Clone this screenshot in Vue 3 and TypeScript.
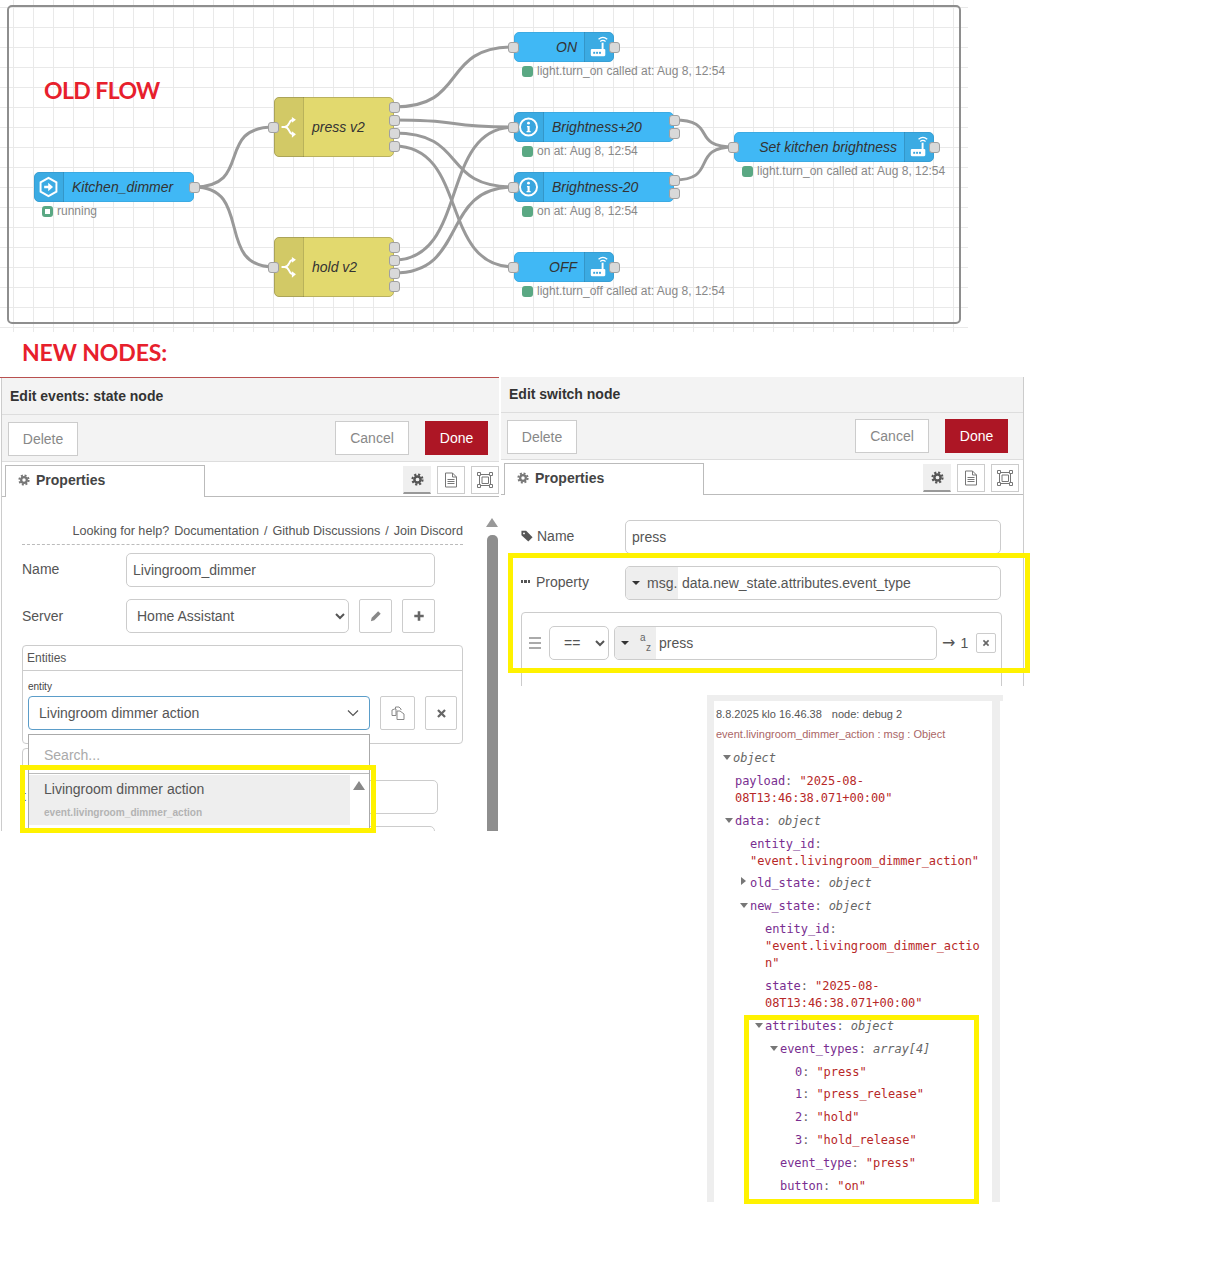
<script setup lang="ts">
interface FlowNode {
  id: string
  label: string
  x: number
  y: number
  w: number
  h: number
  color: 'blue' | 'yellow'
  icon: string
  iconRight?: boolean
  ins: number[]
  outs: number[]
  status?: string
  ring?: boolean
}

const nodes: FlowNode[] = [
  { id: 'k', label: 'Kitchen_dimmer', x: 34, y: 172, w: 160, h: 30, color: 'blue', icon: 'hex', ins: [], outs: [15], status: 'running', ring: true },
  { id: 'p', label: 'press v2', x: 274, y: 97, w: 120, h: 60, color: 'yellow', icon: 'switch', ins: [30], outs: [10, 23, 36, 49] },
  { id: 'h', label: 'hold v2', x: 274, y: 237, w: 120, h: 60, color: 'yellow', icon: 'switch', ins: [30], outs: [10, 23, 36, 49] },
  { id: 'on', label: 'ON', x: 514, y: 32, w: 100, h: 30, color: 'blue', icon: 'router', iconRight: true, ins: [15], outs: [15], status: 'light.turn_on called at: Aug 8, 12:54' },
  { id: 'bp', label: 'Brightness+20', x: 514, y: 112, w: 160, h: 30, color: 'blue', icon: 'info', ins: [15], outs: [8, 21], status: 'on at: Aug 8, 12:54' },
  { id: 'bm', label: 'Brightness-20', x: 514, y: 172, w: 160, h: 30, color: 'blue', icon: 'info', ins: [15], outs: [8, 21], status: 'on at: Aug 8, 12:54' },
  { id: 'off', label: 'OFF', x: 514, y: 252, w: 100, h: 30, color: 'blue', icon: 'router', iconRight: true, ins: [15], outs: [15], status: 'light.turn_off called at: Aug 8, 12:54' },
  { id: 's', label: 'Set kitchen brightness', x: 734, y: 132, w: 200, h: 30, color: 'blue', icon: 'router', iconRight: true, ins: [15], outs: [15], status: 'light.turn_on called at: Aug 8, 12:54' }
]

function wire(x1: number, y1: number, x2: number, y2: number): string {
  const dx = x2 - x1
  const c = dx >= 100 ? 75 : 0.75 * dx
  return `M${x1} ${y1} C${x1 + c} ${y1} ${x2 - c} ${y2} ${x2} ${y2}`
}

const wires: string[] = [
  wire(194, 187, 274, 127),
  wire(194, 187, 274, 267),
  wire(394, 107, 514, 47),
  wire(394, 120, 514, 127),
  wire(394, 133, 514, 187),
  wire(394, 146, 514, 267),
  wire(394, 260, 514, 127),
  wire(394, 273, 514, 187),
  wire(674, 120, 734, 147),
  wire(674, 180, 734, 147)
]

interface DebugRow {
  x: number
  arrow?: 'down' | 'right'
  key?: string
  val?: string
  type?: string
  more?: string[]
}

const rows: DebugRow[] = [
  { x: 733, arrow: 'down', type: 'object' },
  { x: 735, key: 'payload', val: '"2025-08-', more: ['08T13:46:38.071+00:00"'] },
  { x: 735, arrow: 'down', key: 'data', type: 'object' },
  { x: 750, key: 'entity_id', more: ['"event.livingroom_dimmer_action"'] },
  { x: 750, arrow: 'right', key: 'old_state', type: 'object' },
  { x: 750, arrow: 'down', key: 'new_state', type: 'object' },
  { x: 765, key: 'entity_id', more: ['"event.livingroom_dimmer_actio', 'n"'] },
  { x: 765, key: 'state', val: '"2025-08-', more: ['08T13:46:38.071+00:00"'] },
  { x: 765, arrow: 'down', key: 'attributes', type: 'object' },
  { x: 780, arrow: 'down', key: 'event_types', type: 'array[4]' },
  { x: 795, key: '0', val: '"press"' },
  { x: 795, key: '1', val: '"press_release"' },
  { x: 795, key: '2', val: '"hold"' },
  { x: 795, key: '3', val: '"hold_release"' },
  { x: 780, key: 'event_type', val: '"press"' },
  { x: 780, key: 'button', val: '"on"' }
]
</script>

<template>
  <div class="page">
    <svg class="defs" width="0" height="0" aria-hidden="true">
      <symbol id="hex" viewBox="0 0 30 30">
        <polygon points="15,5.5 23.2,10.2 23.2,19.8 15,24.5 6.8,19.8 6.8,10.2" fill="none" stroke="#fff" stroke-width="2" />
        <path d="M10.5 13.6h4.2v-3l5 4.4-5 4.4v-3h-4.2z" fill="#fff" />
      </symbol>
      <symbol id="info" viewBox="0 0 30 30">
        <circle cx="15" cy="15" r="8.8" fill="#3aa6de" stroke="#fff" stroke-width="2" />
        <circle cx="15" cy="11" r="1.5" fill="#fff" />
        <path d="M13.4 14h2.8v5.2h1v1.2h-4.2v-1.2h1v-4h-.6z" fill="#fff" />
      </symbol>
      <symbol id="switch" viewBox="0 0 30 30">
        <path d="M7.8 15H11C14 15 15 12.500 16 10.500C16.500 9 17.500 8 19.500 7.500M11 15C14 15 15 17.500 16 19.500C16.500 21 17.500 22 19.500 22.500" fill="none" stroke="#fff" stroke-width="2" />
        <path d="M18.500 4.700L22.700 7.500L18.500 10.500ZM18.500 19.500L22.700 22.500L18.500 26Z" fill="#fff" />
      </symbol>
      <symbol id="router" viewBox="0 0 30 30">
        <rect x="6" y="17" width="15" height="7.500" rx="1.200" fill="#fff" />
        <rect x="8.500" y="20" width="2" height="2" fill="#3aa6de" />
        <rect x="11.500" y="20" width="2" height="2" fill="#3aa6de" />
        <rect x="14.500" y="20" width="2" height="2" fill="#3aa6de" />
        <rect x="17.200" y="10.500" width="2" height="7" fill="#fff" />
        <path d="M15.700 9.400Q18.500 7 21.300 9.400M14 7Q18.500 3 23 7" fill="none" stroke="#fff" stroke-width="1.300" />
      </symbol>
      <symbol id="gear" viewBox="0 0 16 16">
        <circle cx="8" cy="8" r="6.200" fill="none" stroke="currentColor" stroke-width="2.600" stroke-dasharray="2.600 2.270" />
        <circle cx="8" cy="8" r="3.800" fill="none" stroke="currentColor" stroke-width="3" />
      </symbol>
      <symbol id="doc" viewBox="0 0 14 16">
        <path d="M1.500 1h7l4 4v10h-11zM8.500 1v4h4M3.500 7.500h7M3.500 9.500h7M3.500 11.500h7" fill="none" stroke="currentColor" />
      </symbol>
      <symbol id="frame" viewBox="0 0 16 16">
        <path d="M2.500 2.500h11v11h-11zM5 5h6.500v6.500H5z" fill="none" stroke="currentColor" />
        <path d="M.5.5h3v3h-3zM12.500.5h3v3h-3zM.5 12.500h3v3h-3zM12.500 12.500h3v3h-3z" fill="#fff" stroke="currentColor" />
      </symbol>
      <symbol id="pencil" viewBox="0 0 14 14">
        <path d="M9.500 1.500l3 3-7.500 7.500-4 1 1-4z" fill="currentColor" />
      </symbol>
      <symbol id="plus" viewBox="0 0 14 14">
        <path d="M5.500 1.500h3v4h4v3h-4v4h-3v-4h-4v-3h4z" fill="currentColor" />
      </symbol>
      <symbol id="times" viewBox="0 0 14 14">
        <path d="M3.500 1.500L7 5l3.500-3.500 2 2L9 7l3.500 3.500-2 2L7 9l-3.500 3.500-2-2L5 7 1.500 3.500z" fill="currentColor" />
      </symbol>
      <symbol id="copy" viewBox="0 0 14 14">
        <path d="M4.500 3V1h3.500l2 2v1M1 4l2.500-1H5v6.500H1zM6 5h3l4 3v5.500H6z" fill="none" stroke="currentColor" />
      </symbol>
      <symbol id="tag" viewBox="0 0 14 14">
        <path d="M.5 1h5.500l7.500 7.500-5 5L.5 6z" fill="currentColor" />
        <circle cx="3.500" cy="4" r="1.100" fill="#fff" />
      </symbol>
    </svg>

    <section class="canvas">
      <div class="group"></div>
      <div class="old-title">OLD FLOW</div>
      <svg class="wires" width="968" height="332">
        <path v-for="(d, i) in wires" :key="i" :d="d" />
      </svg>
      <div
        v-for="n in nodes"
        :key="n.id"
        class="node"
        :class="[n.color, { 'icon-right': n.iconRight }]"
        :style="{ left: n.x + 'px', top: n.y + 'px', width: n.w + 'px', height: n.h + 'px' }"
      >
        <div class="node-icon">
          <svg width="30" height="30"><use :href="'#' + n.icon" /></svg>
        </div>
        <div class="node-label">{{ n.label }}</div>
        <span v-for="p in n.ins" :key="'i' + p" class="port port-in" :style="{ top: p - 5 + 'px' }"></span>
        <span v-for="p in n.outs" :key="'o' + p" class="port port-out" :style="{ top: p - 5 + 'px' }"></span>
        <div v-if="n.status" class="status">
          <i class="dot" :class="{ ring: n.ring }"></i>{{ n.status }}
        </div>
      </div>
    </section>

    <h2 class="new-title">NEW NODES:</h2>

    <div class="panels">
      <div class="panel-left">
        <div class="tray">
          <div class="tray-head head-l">Edit events: state node</div>
          <div class="tray-btns">
            <button class="btn btn-del">Delete</button>
            <span class="grow"></span>
            <button class="btn btn-cancel">Cancel</button>
            <button class="btn btn-done">Done</button>
          </div>
          <div class="tabs">
            <div class="tab"><svg class="tab-gear" width="12" height="12"><use href="#gear" /></svg>Properties</div>
            <span class="grow"></span>
            <span class="tool active"><svg width="13" height="13"><use href="#gear" /></svg></span>
            <span class="tool"><svg width="14" height="16"><use href="#doc" /></svg></span>
            <span class="tool"><svg width="16" height="16"><use href="#frame" /></svg></span>
          </div>
          <div class="left-body">
            <div class="form">
              <div class="help">
                <span>Looking for help?</span><span>Documentation</span><span>/</span><span>Github Discussions</span><span>/</span><span>Join Discord</span>
              </div>
              <div class="row row-name">
                <label class="lbl">Name</label>
                <div class="input w309">Livingroom_dimmer</div>
              </div>
              <div class="row row-next">
                <label class="lbl">Server</label>
                <select class="native w223"><option>Home Assistant</option></select>
                <button class="sq"><svg width="12" height="12"><use href="#pencil" /></svg></button>
                <button class="sq dark"><svg width="12" height="12"><use href="#plus" /></svg></button>
              </div>
              <div class="entities">
                <div class="ent-head">Entities</div>
                <div class="ent-label">entity</div>
                <div class="ent-row">
                  <div class="ent-select">
                    <span>Livingroom dimmer action</span>
                    <svg width="12" height="8" viewBox="0 0 12 8"><path d="M1 1.500l5 5 5-5" fill="none" stroke="#555" stroke-width="1.200" /></svg>
                  </div>
                  <button class="sq w35"><svg width="14" height="14"><use href="#copy" /></svg></button>
                  <button class="sq w32 dark"><svg width="11" height="11"><use href="#times" /></svg></button>
                </div>
              </div>
              <div class="stub"></div>
              <div class="row row-behind">
                <label class="lbl">t</label>
                <div class="input w312"></div>
              </div>
              <div class="row row-behind2">
                <label class="lbl"></label>
                <div class="input w309"></div>
              </div>
              <div class="menu">
                <div class="menu-search">Search...</div>
                <div class="menu-list">
                  <div class="menu-item">
                    <div class="item-main">Livingroom dimmer action</div>
                    <div class="item-sub">event.livingroom_dimmer_action</div>
                  </div>
                  <i class="menu-up"></i>
                </div>
              </div>
            </div>
            <div class="scroll">
              <i class="scroll-up"></i>
              <div class="scroll-thumb"></div>
            </div>
          </div>
        </div>
      </div>

      <div class="col-right">
        <div class="panel-right">
          <div class="tray-head head-r">Edit switch node</div>
          <div class="tray-btns btns-r">
            <button class="btn btn-del">Delete</button>
            <span class="grow"></span>
            <button class="btn btn-cancel">Cancel</button>
            <button class="btn btn-done">Done</button>
          </div>
          <div class="tabs tabs-r">
            <div class="tab"><svg class="tab-gear" width="12" height="12"><use href="#gear" /></svg>Properties</div>
            <span class="grow"></span>
            <span class="tool active"><svg width="13" height="13"><use href="#gear" /></svg></span>
            <span class="tool"><svg width="14" height="16"><use href="#doc" /></svg></span>
            <span class="tool"><svg width="16" height="16"><use href="#frame" /></svg></span>
          </div>
          <div class="right-body">
            <div class="row r-name">
              <label class="lbl-r"><svg width="12" height="12"><use href="#tag" /></svg>Name</label>
              <div class="input w376">press</div>
            </div>
            <div class="row r-prop">
              <label class="lbl-r lbl-prop"><span class="dots"><i></i><i></i><i></i></span>Property</label>
              <div class="typed w376">
                <span class="typed-pre pre-msg"><i class="caret"></i>msg.</span>
                <span class="typed-val">data.new_state.attributes.event_type</span>
              </div>
            </div>
            <div class="rules">
              <div class="rule">
                <span class="handle"><i></i><i></i><i></i></span>
                <select class="native op"><option>==</option></select>
                <div class="typed w323">
                  <span class="typed-pre pre-az"><i class="caret"></i><span class="az"><small>a</small><small>z</small></span></span>
                  <span class="typed-val val-press">press</span>
                </div>
                <span class="out"><span class="arrow">→</span><span class="out-num">1</span></span>
                <button class="sq mini dark"><svg width="8" height="8"><use href="#times" /></svg></button>
              </div>
            </div>
          </div>
        </div>

        <div class="debug">
          <div class="debug-body">
            <div class="dbg-meta"><span>8.8.2025 klo 16.46.38</span><span>node: debug 2</span></div>
            <div class="dbg-topic">event.livingroom_dimmer_action : msg : Object</div>
            <div class="dbg-tree">
              <div v-for="(r, i) in rows" :key="i" class="dbg-row" :style="{ paddingLeft: r.x - 716 + 'px' }">
                <div class="dbg-line">
                  <i v-if="r.arrow" class="tri" :class="r.arrow"></i>
                  <template v-if="r.key"><span class="k">{{ r.key }}</span><span class="colon">: </span></template>
                  <span v-if="r.val" class="s">{{ r.val }}</span>
                  <span v-if="r.type" class="t">{{ r.type }}</span>
                </div>
                <div v-for="(m, j) in r.more" :key="j" class="dbg-line s">{{ m }}</div>
              </div>
            </div>
          </div>
        </div>
      </div>

      <div class="mark mark-a"></div>
      <div class="mark mark-b"></div>
      <div class="mark mark-c"></div>
    </div>
  </div>
</template>

<style scoped>
.page {
  position: relative;
  width: 1210px;
  height: 1285px;
  overflow: hidden;
  background: #fff;
  font-family: "Liberation Sans", Arial, sans-serif;
  font-size: 14px;
  color: #555;
}
.defs { position: absolute; }
.grow { flex: 1; }

/* canvas */
.canvas {
  position: relative;
  width: 968px;
  height: 332px;
  background-color: #fff;
  background-image:
    linear-gradient(to right, #e9e9e9 1px, transparent 1px),
    linear-gradient(to bottom, #e9e9e9 1px, transparent 1px);
  background-size: 20px 20px;
  background-position: 13px 7px;
}
.group {
  position: absolute;
  left: 7px;
  top: 5px;
  width: 950px;
  height: 315px;
  border: 2px solid #8e8e8e;
  border-radius: 5px;
}
.old-title {
  position: absolute;
  left: 44px;
  top: 76px;
  font-family: Lato, "Open Sans", sans-serif;
  font-weight: 700;
  font-size: 23px;
  letter-spacing: -0.6px;
  line-height: 29px;
  color: #e7202c;
}
.wires { position: absolute; left: 0; top: 0; }
.wires path { fill: none; stroke: #999; stroke-width: 3; }
.node {
  position: absolute;
  box-sizing: border-box;
  display: flex;
  border-radius: 5px;
  border: 1px solid transparent;
  color: #333;
}
.node.blue { background: #40b8f5; border-color: #3cabe3; }
.node.yellow { background: #e2d96e; border-color: #b9b160; }
.node-icon {
  width: 29px;
  flex: none;
  margin: -1px 0 -1px -1px;
  display: flex;
  align-items: center;
  justify-content: center;
  border-radius: 5px 0 0 5px;
  border-right: 1px solid rgba(0, 0, 0, 0.12);
  background: rgba(0, 0, 0, 0.07);
}
.node-label {
  flex: 1;
  align-self: center;
  padding-left: 8px;
  font-style: italic;
  font-size: 14px;
  line-height: 16px;
  white-space: nowrap;
}
.icon-right { flex-direction: row-reverse; }
.icon-right .node-icon {
  margin: -1px -1px -1px 0;
  border-radius: 0 5px 5px 0;
  border-right: none;
  border-left: 1px solid rgba(0, 0, 0, 0.12);
}
.icon-right .node-label { text-align: right; padding: 0 7px 0 0; }
.port {
  position: absolute;
  box-sizing: border-box;
  width: 11px;
  height: 11px;
  background: #d9d9d9;
  border: 1px solid #a0a0a0;
  border-radius: 3px;
  margin-top: -1.5px;
}
.port-in { left: -7px; }
.port-out { right: -7px; }
.status {
  position: absolute;
  left: 7px;
  top: 100%;
  margin-top: 2px;
  display: flex;
  align-items: center;
  font-size: 12px;
  line-height: 16px;
  color: #888;
  white-space: nowrap;
}
.dot {
  box-sizing: border-box;
  width: 11px;
  height: 11px;
  margin-right: 4px;
  border-radius: 3px;
  background: #5aa883;
}
.dot.ring { background: #fff; border: 3px solid #5aa883; }

.new-title {
  margin: 0;
  height: 45px;
  padding: 6px 0 0 22px;
  box-sizing: border-box;
  font-family: Lato, "Open Sans", sans-serif;
  font-weight: 700;
  font-size: 23px;
  letter-spacing: -0.1px;
  line-height: 29px;
  color: #e7202c;
}

.panels {
  position: relative;
  display: flex;
  align-items: flex-start;
  gap: 2px;
}
.mark {
  position: absolute;
  box-sizing: border-box;
  border: 5px solid #fff200;
}
.mark-a { left: 20px; top: 388px; width: 356px; height: 68px; }
.mark-b { left: 508px; top: 176px; width: 522px; height: 120px; }
.mark-c { left: 744px; top: 638px; width: 235px; height: 189px; }

/* left */
.panel-left {
  width: 499px;
  height: 454px;
  overflow: hidden;
  border-top: 1px solid #b8504f;
  box-sizing: border-box;
}
.tray {
  margin-left: 1px;
  height: 100%;
  border-left: 1px solid #ccc;
  display: flex;
  flex-direction: column;
}
.tray-head {
  height: 36px;
  flex: none;
  box-sizing: border-box;
  padding-left: 8px;
  line-height: 35px;
  font-weight: 700;
  color: #333;
  background: #f3f3f3;
  border-bottom: 1px solid #ddd;
}
.head-l { height: 37px; line-height: 36px; }
.tray-btns {
  height: 47px;
  flex: none;
  box-sizing: border-box;
  display: flex;
  padding: 6px 11px 0 6px;
  background: #f3f3f3;
  border-bottom: 1px solid #ddd;
}
.btn {
  box-sizing: border-box;
  height: 34px;
  font: inherit;
  padding: 0;
  border: 1px solid #ccc;
  background: #fff;
  color: #888;
}
.btn-del { width: 70px; margin-top: 1px; }
.btn-cancel { width: 74px; margin-right: 16px; }
.btn-done { width: 63px; background: #ad1625; border-color: #ad1625; color: #fff; }
.tabs {
  height: 35px;
  flex: none;
  box-sizing: border-box;
  display: flex;
  padding-left: 3px;
  border-bottom: 1px solid #bbb;
}
.tab {
  box-sizing: border-box;
  width: 200px;
  height: 32px;
  margin-top: 3px;
  padding: 0 0 3px 12px;
  background: #fff;
  border: 1px solid #bbb;
  border-bottom: none;
  font-weight: 700;
  display: flex;
  align-items: center;
  color: #444;
}
.tab-gear { color: #777; margin-right: 6px; }
.tool {
  box-sizing: border-box;
  width: 28px;
  height: 28px;
  margin: 4px 6px 0 0;
  display: flex;
  align-items: center;
  justify-content: center;
  border: 1px solid #ccc;
  background: #fff;
  color: #777;
}
.tool:last-child { margin-right: 0; }
.tool.active {
  background: #efefef;
  color: #555;
  border-color: #efefef;
  border-bottom: 2px solid #999;
}
.left-body { display: flex; flex: 1; min-height: 0; }
.form {
  position: relative;
  width: 484px;
  flex: none;
  box-sizing: border-box;
  padding-left: 20px;
  overflow: hidden;
}
.help {
  width: 441px;
  margin-top: 27px;
  height: 21px;
  box-sizing: border-box;
  display: flex;
  justify-content: flex-end;
  gap: 5px;
  font-size: 12.6px;
  line-height: 15px;
  color: #555;
  border-bottom: 1px dashed #bbb;
  white-space: nowrap;
}
.row { display: flex; align-items: center; }
.row-name { margin-top: 8px; }
.row-next { margin-top: 12px; gap: 10px; }
.row-next .lbl { margin-right: -10px; padding-bottom: 1px; }
.lbl { width: 104px; flex: none; padding-bottom: 3px; color: #555; }
.input {
  box-sizing: border-box;
  height: 34px;
  line-height: 33px;
  padding-left: 6px;
  border: 1px solid #ccc;
  border-radius: 5px;
  background: #fff;
  color: #555;
}
.w309 { width: 309px; }
.w312 { width: 312px; }
.w376 { width: 376px; }
.native {
  box-sizing: border-box;
  height: 34px;
  font: inherit;
  color: #555;
  background: #fff;
  border: 1px solid #ccc;
  border-radius: 5px;
  padding-left: 6px;
}
.w223 { width: 223px; }
.sq {
  box-sizing: border-box;
  width: 33px;
  height: 34px;
  padding: 0;
  display: flex;
  align-items: center;
  justify-content: center;
  background: #fff;
  border: 1px solid #ccc;
  border-radius: 2px;
  color: #888;
  flex: none;
}
.sq.dark { color: #666; }
.w35 { width: 35px; }
.w32 { width: 32px; }
.entities {
  box-sizing: border-box;
  width: 441px;
  height: 99px;
  margin-top: 12px;
  border: 1px solid #ccc;
  border-radius: 4px;
}
.ent-head {
  height: 25px;
  box-sizing: border-box;
  padding-left: 4px;
  font-size: 12px;
  line-height: 24px;
  border-bottom: 1px solid #ccc;
}
.ent-label {
  padding-left: 5px;
  margin-top: 10px;
  font-size: 10px;
  line-height: 12px;
  color: #444;
}
.ent-row { display: flex; gap: 10px; padding: 3px 0 0 5px; }
.ent-select {
  box-sizing: border-box;
  width: 342px;
  height: 34px;
  display: flex;
  align-items: center;
  justify-content: space-between;
  padding: 0 10px;
  border: 1px solid #5b9dc9;
  border-radius: 4px;
  color: #555;
}
.stub {
  width: 30px;
  height: 20px;
  margin-top: 4px;
  box-sizing: border-box;
  border: 1px solid #ccc;
  border-radius: 4px 0 0 0;
}
.row-behind { margin-top: 12px; padding-left: 0; }
.row-behind2 { margin-top: 12px; }
.menu {
  position: absolute;
  left: 26px;
  top: 237px;
  box-sizing: border-box;
  width: 342px;
  height: 120px;
  background: #fff;
  border: 1px solid #aaa;
}
.menu-search {
  height: 39px;
  box-sizing: border-box;
  padding: 12px 0 0 15px;
  line-height: 17px;
  color: #aaa;
  border-bottom: 1px solid #bbb;
}
.menu-list { display: flex; padding-top: 1px; }
.menu-item {
  width: 321px;
  height: 50px;
  box-sizing: border-box;
  padding: 6px 0 0 15px;
  background: #eee;
}
.item-main { line-height: 16px; color: #555; }
.item-sub {
  margin-top: 10px;
  font-size: 10.1px;
  line-height: 12px;
  font-weight: 700;
  color: #b3b3b3;
}
.menu-up {
  width: 0;
  height: 0;
  margin: 6px 0 0 3px;
  border-left: 6.5px solid transparent;
  border-right: 6.5px solid transparent;
  border-bottom: 9px solid #888;
}
.scroll { flex: 1; display: flex; flex-direction: column; align-items: center; padding-right: 1px; }
.scroll-up {
  width: 0;
  height: 0;
  margin-top: 21px;
  border-left: 6.5px solid transparent;
  border-right: 6.5px solid transparent;
  border-bottom: 9px solid #999;
}
.scroll-thumb {
  width: 11px;
  flex: 1;
  margin-top: 8px;
  background: #8e8e8e;
  border-radius: 5px 5px 0 0;
}

/* right */
.col-right { width: 527px; }
.panel-right {
  box-sizing: border-box;
  width: 523px;
  height: 309px;
  overflow: hidden;
  border-right: 1px solid #ccc;
}
.head-r { line-height: 34px; }
.btns-r { padding: 6px 15px 0 6px; }
.tabs-r { padding: 0 4px 0 3px; }
.right-body { padding-left: 20px; }
.r-name { margin-top: 25px; }
.lbl-r {
  width: 104px;
  flex: none;
  display: flex;
  align-items: center;
  gap: 4px;
  padding-bottom: 3px;
  color: #555;
}
.lbl-prop { gap: 6px; }
.dots { display: flex; gap: 1px; width: 9px; }
.dots i { width: 2.4px; height: 3px; background: #555; }
.r-prop { margin-top: 12px; }
.typed {
  box-sizing: border-box;
  height: 34px;
  display: flex;
  align-items: stretch;
  border: 1px solid #ccc;
  border-radius: 5px;
  background: #fff;
  overflow: hidden;
}
.w323 { width: 323px; flex: none; }
.typed-pre {
  display: flex;
  align-items: center;
  background: #eee;
  color: #555;
}
.pre-msg { width: 52px; padding-left: 6px; gap: 7px; box-sizing: border-box; flex: none; }
.pre-az { width: 41px; padding-left: 6px; gap: 11px; box-sizing: border-box; flex: none; }
.caret {
  width: 0;
  height: 0;
  flex: none;
  border-left: 4px solid transparent;
  border-right: 4px solid transparent;
  border-top: 4.5px solid #333;
}
.typed-val { line-height: 32px; padding-left: 4px; color: #555; white-space: nowrap; }
.val-press { padding-left: 3px; }
.az { display: flex; height: 20px; width: 11px; justify-content: space-between; }
.az small { font-size: 10px; line-height: 10px; color: #666; }
.az small + small { align-self: flex-end; }
.rules {
  box-sizing: border-box;
  width: 481px;
  height: 90px;
  margin-top: 12px;
  border: 1px solid #ccc;
  border-radius: 4px;
}
.rule { display: flex; align-items: center; padding: 13px 0 0 7px; }
.handle { width: 12px; display: flex; flex-direction: column; gap: 3px; margin-right: 8px; flex: none; }
.handle i { height: 2px; background: #aaa; }
.op { width: 60px; margin-right: 5px; padding-left: 10px; flex: none; }
.out {
  width: 39px;
  flex: none;
  display: flex;
  align-items: center;
  gap: 5px;
  padding-left: 5px;
  box-sizing: border-box;
  color: #555;
  white-space: nowrap;
}
.arrow { font-family: "DejaVu Sans", sans-serif; font-size: 16px; line-height: 16px; }
.mini { width: 20px; height: 20px; }

/* debug */
.debug { margin: 9px 0 0 206px; width: 296px; border-top: 6px solid #eee; }
.debug-body {
  box-sizing: border-box;
  width: 293px;
  height: 501px;
  padding-left: 2px;
  border-left: 7px solid #eee;
  border-right: 8px solid #eee;
  overflow: hidden;
}
.dbg-meta {
  margin-top: 6px;
  display: flex;
  gap: 10px;
  font-size: 11px;
  line-height: 14px;
  color: #555;
}
.dbg-topic {
  margin-top: 6px;
  font-size: 11px;
  line-height: 14px;
  color: #a66;
  white-space: nowrap;
}
.dbg-tree {
  margin-top: 9px;
  display: flex;
  flex-direction: column;
  gap: 5.87px;
  font-family: "DejaVu Sans Mono", "Liberation Mono", monospace;
  font-size: 12px;
  letter-spacing: -0.07px;
}
.dbg-line { line-height: 17px; height: 17px; white-space: nowrap; }
.k { color: #792e90; }
.colon { color: #666; }
.s { color: #b72828; }
.t { color: #666; font-style: italic; }
.tri {
  display: inline-block;
  width: 0;
  height: 0;
  vertical-align: 2px;
  border-style: solid;
  border-color: transparent;
}
.tri.down {
  margin-left: -10px;
  margin-right: 2px;
  border-width: 5px 4px 0 4px;
  border-top-color: #777;
}
.tri.right {
  margin-left: -9px;
  margin-right: 4px;
  border-width: 4px 0 4px 5px;
  border-left-color: #777;
}
</style>
